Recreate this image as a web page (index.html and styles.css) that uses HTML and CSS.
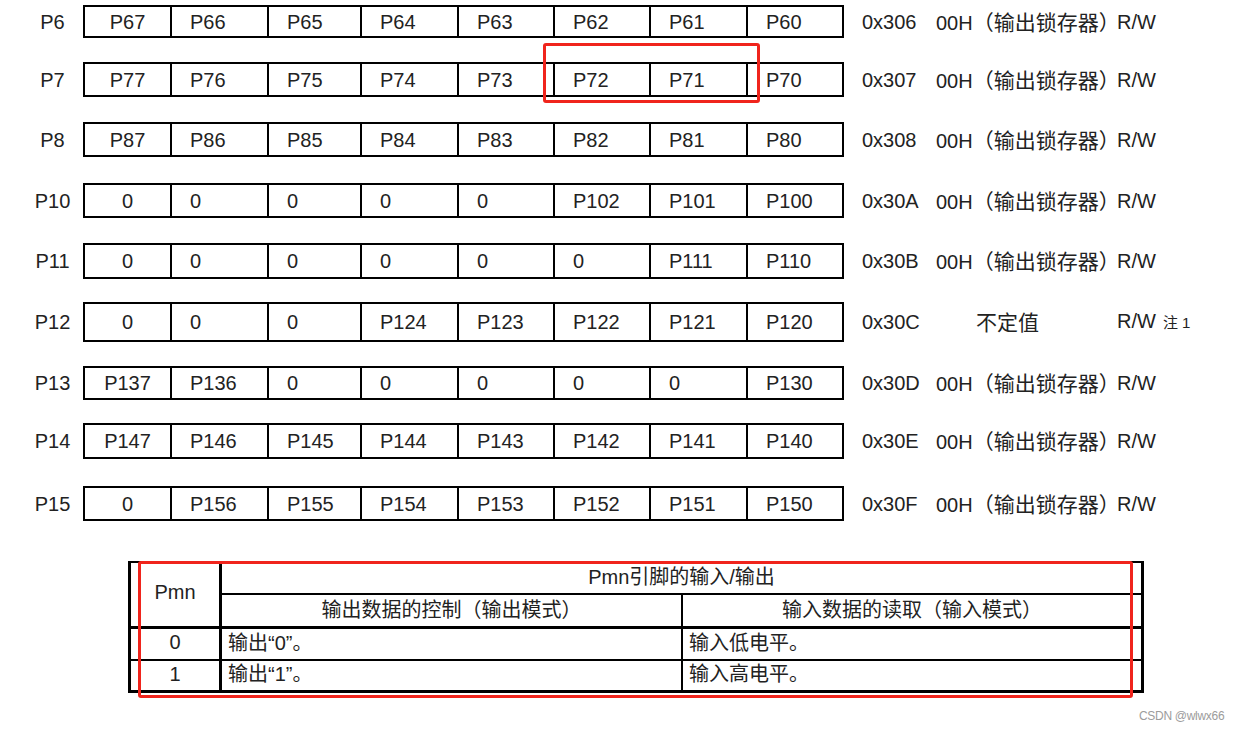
FILE: index.html
```html
<!DOCTYPE html>
<html lang="zh-CN">
<head>
<meta charset="utf-8">
<title>端口寄存器</title>
<link rel="stylesheet" href="styles.css">
</head>
<body>
<div class="page">
  <div class="regs">
    <div class="reg">
      <div class="label">P6</div>
      <div class="bits"><span>P67</span><span>P66</span><span>P65</span><span>P64</span><span>P63</span><span>P62</span><span>P61</span><span>P60</span></div>
      <div class="addr">0x306</div>
      <div class="val">00H<span class="cj">（输出锁存器）</span></div>
      <div class="rw">R/W</div>
    </div>
    <div class="reg">
      <div class="label">P7</div>
      <div class="bits"><span>P77</span><span>P76</span><span>P75</span><span>P74</span><span>P73</span><span>P72</span><span>P71</span><span>P70</span></div>
      <div class="addr">0x307</div>
      <div class="val">00H<span class="cj">（输出锁存器）</span></div>
      <div class="rw">R/W</div>
    </div>
    <div class="reg">
      <div class="label">P8</div>
      <div class="bits"><span>P87</span><span>P86</span><span>P85</span><span>P84</span><span>P83</span><span>P82</span><span>P81</span><span>P80</span></div>
      <div class="addr">0x308</div>
      <div class="val">00H<span class="cj">（输出锁存器）</span></div>
      <div class="rw">R/W</div>
    </div>
    <div class="reg">
      <div class="label">P10</div>
      <div class="bits"><span>0</span><span>0</span><span>0</span><span>0</span><span>0</span><span>P102</span><span>P101</span><span>P100</span></div>
      <div class="addr">0x30A</div>
      <div class="val">00H<span class="cj">（输出锁存器）</span></div>
      <div class="rw">R/W</div>
    </div>
    <div class="reg">
      <div class="label">P11</div>
      <div class="bits"><span>0</span><span>0</span><span>0</span><span>0</span><span>0</span><span>0</span><span>P111</span><span>P110</span></div>
      <div class="addr">0x30B</div>
      <div class="val">00H<span class="cj">（输出锁存器）</span></div>
      <div class="rw">R/W</div>
    </div>
    <div class="reg">
      <div class="label">P12</div>
      <div class="bits"><span>0</span><span>0</span><span>0</span><span>P124</span><span>P123</span><span>P122</span><span>P121</span><span>P120</span></div>
      <div class="addr">0x30C</div>
      <div class="val undef"><span class="cj">不定值</span></div>
      <div class="rw">R/W<span class="note">注 1</span></div>
    </div>
    <div class="reg">
      <div class="label">P13</div>
      <div class="bits"><span>P137</span><span>P136</span><span>0</span><span>0</span><span>0</span><span>0</span><span>0</span><span>P130</span></div>
      <div class="addr">0x30D</div>
      <div class="val">00H<span class="cj">（输出锁存器）</span></div>
      <div class="rw">R/W</div>
    </div>
    <div class="reg">
      <div class="label">P14</div>
      <div class="bits"><span>P147</span><span>P146</span><span>P145</span><span>P144</span><span>P143</span><span>P142</span><span>P141</span><span>P140</span></div>
      <div class="addr">0x30E</div>
      <div class="val">00H<span class="cj">（输出锁存器）</span></div>
      <div class="rw">R/W</div>
    </div>
    <div class="reg">
      <div class="label">P15</div>
      <div class="bits"><span>0</span><span>P156</span><span>P155</span><span>P154</span><span>P153</span><span>P152</span><span>P151</span><span>P150</span></div>
      <div class="addr">0x30F</div>
      <div class="val">00H<span class="cj">（输出锁存器）</span></div>
      <div class="rw">R/W</div>
    </div>
  </div>

  <div class="io">
    <div class="c pmn">Pmn</div>
    <div class="c title">Pmn引脚的输入/输出</div>
    <div class="c sub sub-l">输出数据的控制（输出模式）</div>
    <div class="c sub sub-r">输入数据的读取（输入模式）</div>
    <div class="c key row0">0</div>
    <div class="c txt row0 mid">输出“0”。</div>
    <div class="c txt row0">输入低电平。</div>
    <div class="c key">1</div>
    <div class="c txt mid">输出“1”。</div>
    <div class="c txt">输入高电平。</div>
  </div>

  <div class="mark mark-a"></div>
  <div class="mark mark-b"></div>
  <div class="wm">CSDN @wlwx66</div>
</div>
</body>
</html>
```

FILE: styles.css
```css
html, body {
  margin: 0;
  padding: 0;
  background: #ffffff;
}

body {
  font-family: "Liberation Sans", Arial, "Noto Sans CJK SC", sans-serif;
  color: #222222;
}

.page {
  position: relative;
  width: 1236px;
  height: 731px;
  overflow: hidden;
  padding-top: 5px;
  box-sizing: border-box;
}

/* ---------- register rows ---------- */
.regs {
  display: flex;
  flex-direction: column;
}

.reg {
  display: flex;
  align-items: center;
  height: 35px;
  font-size: 20px;
  line-height: 22px;
}

.reg:nth-child(1) { height: 33px; }
.reg:nth-child(2) { margin-top: 24px; }
.reg:nth-child(3) { margin-top: 25px; }
.reg:nth-child(4) { margin-top: 26px; }
.reg:nth-child(5) { margin-top: 25px; height: 36px; }
.reg:nth-child(6) { margin-top: 23px; height: 40px; }
.reg:nth-child(7) { margin-top: 24px; height: 34px; }
.reg:nth-child(8) { margin-top: 23px; height: 36px; }
.reg:nth-child(9) { margin-top: 27px; }

.label {
  width: 61px;
  margin-left: 22px;
  text-align: center;
}

.bits {
  display: grid;
  grid-template-columns: 85px 97px 93px 97px 96px 96px 97px 96px;
  height: 100%;
  border: 2px solid #000000;
  box-sizing: border-box;
}

.bits span {
  display: flex;
  align-items: center;
  border-left: 2px solid #000000;
  padding-left: 18px;
}

.bits span:first-child {
  border-left: 0;
  padding-left: 0;
  justify-content: center;
}

.addr {
  margin-left: 18px;
  width: 74px;
}

.val {
  width: 181px;
  white-space: nowrap;
}

.val.undef {
  padding-left: 40px;
  box-sizing: border-box;
}

.cj {
  font-family: "Noto Sans CJK SC", sans-serif;
  font-size: 21px;
}

.rw {
  white-space: nowrap;
}

.note {
  font-family: "Liberation Sans", "Noto Sans CJK SC", sans-serif;
  font-size: 15px;
  margin-left: 7px;
}

/* ---------- pin I/O table ---------- */
.io {
  display: grid;
  grid-template-columns: 91px 461px 458px;
  grid-template-rows: 32px 34px 32px 29px;
  width: 1016px;
  margin: 40px 0 0 128px;
  border-style: solid;
  border-color: #000000;
  border-width: 2px 3px 3px 3px;
  box-sizing: border-box;
  font-size: 20px;
  line-height: 22px;
}

.c {
  display: flex;
  align-items: center;
  box-sizing: border-box;
  padding-bottom: 2px;
}

.pmn {
  grid-row: 1 / 3;
  grid-column: 1;
  justify-content: center;
  border-right: 3px solid #000000;
  border-bottom: 3px solid #000000;
  padding-bottom: 6px;
}

.title {
  grid-column: 2 / 4;
  justify-content: center;
  border-bottom: 2px solid #000000;
}

.sub {
  justify-content: center;
  border-bottom: 3px solid #000000;
}

.sub-l {
  border-right: 2px solid #000000;
}

.key {
  justify-content: center;
  border-right: 3px solid #000000;
  padding-bottom: 4px;
}

.txt {
  padding-left: 6px;
  padding-bottom: 3px;
}

.mid {
  border-right: 2px solid #000000;
}

.row0 {
  border-bottom: 2px solid #000000;
}

/* ---------- overlays ---------- */
.mark {
  position: absolute;
  border: 3px solid #f0241c;
  border-radius: 3px;
  box-sizing: border-box;
}

.mark-a {
  left: 543px;
  top: 43px;
  width: 217px;
  height: 60px;
}

.mark-b {
  left: 138px;
  top: 561px;
  width: 995px;
  height: 137px;
}

.wm {
  position: absolute;
  left: 1139px;
  top: 709px;
  font-size: 12px;
  color: #9c9c9c;
  letter-spacing: -0.3px;
}
```
